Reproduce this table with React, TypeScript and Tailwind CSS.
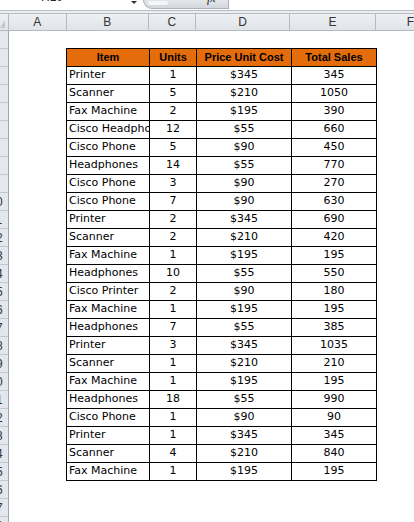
import React from "react";

const rows: [string, number, string, number][] = [
  ["Printer", 1, "$345", 345],
  ["Scanner", 5, "$210", 1050],
  ["Fax Machine", 2, "$195", 390],
  ["Cisco Headphones", 12, "$55", 660],
  ["Cisco Phone", 5, "$90", 450],
  ["Headphones", 14, "$55", 770],
  ["Cisco Phone", 3, "$90", 270],
  ["Cisco Phone", 7, "$90", 630],
  ["Printer", 2, "$345", 690],
  ["Scanner", 2, "$210", 420],
  ["Fax Machine", 1, "$195", 195],
  ["Headphones", 10, "$55", 550],
  ["Cisco Printer", 2, "$90", 180],
  ["Fax Machine", 1, "$195", 195],
  ["Headphones", 7, "$55", 385],
  ["Printer", 3, "$345", 1035],
  ["Scanner", 1, "$210", 210],
  ["Fax Machine", 1, "$195", 195],
  ["Headphones", 18, "$55", 990],
  ["Cisco Phone", 1, "$90", 90],
  ["Printer", 1, "$345", 345],
  ["Scanner", 4, "$210", 840],
  ["Fax Machine", 1, "$195", 195],
];

const rowNums = Array.from({ length: 28 }, (_, i) => i + 1);

export default function App() {
  return (
    <div className="w-[414px] h-[522px] overflow-hidden bg-white relative" style={{ fontFamily: "'DejaVu Sans', sans-serif" }}>
      {/* formula bar remnant */}
      <div className="h-[10px] flex bg-white overflow-hidden">
        <div className="w-[143px] relative">
          <div className="absolute left-[41px] top-[-10px] text-[12px] leading-[14px] text-[#222]" style={{ fontFamily: "'Liberation Sans', sans-serif" }}>H10</div>
          <div className="absolute left-[131px] top-[1px] w-0 h-0 border-l-[3px] border-r-[3px] border-t-[3px] border-l-transparent border-r-transparent border-t-[#333]" />
        </div>
        <div className="w-[86px] h-[9px] rounded-bl-[9px] bg-gradient-to-b from-[#e3e6ea] to-[#d3d7dd] border-l border-b border-r border-[#a9b0b9] relative">
          <div className="absolute left-[4px] top-[1px] w-[20px] h-[4px] rounded-full bg-[#f4f5f7]" />
          <div className="absolute left-[63px] top-[-9px] text-[12px] italic leading-[14px] text-[#222]" style={{ fontFamily: "'Liberation Serif', serif" }}>fx</div>
        </div>
        <div className="flex-1" />
      </div>
      <div className="h-[1px] bg-[#b6bcc4]" />
      <div className="h-[2px] bg-[#eceef1]" />
      {/* column headers */}
      <div className="flex h-[18px] border-t border-b border-[#b4bac2] bg-gradient-to-b from-[#eef0f3] to-[#e0e4e9] text-[12px] text-[#333]" style={{ fontFamily: "'Liberation Sans', sans-serif" }}>
        <div className="w-[9px] border-r border-[#b4bac2] relative">
          <div className="absolute left-0 bottom-[2px] w-0 h-0 border-b-[8px] border-b-[#c4c9d0] border-l-[5px] border-l-transparent" />
        </div>
        <div className="w-[58px] border-r border-[#b4bac2] flex items-center justify-center">A</div>
        <div className="w-[83px] border-r border-[#b4bac2] flex items-center justify-center">B</div>
        <div className="w-[47px] border-r border-[#b4bac2] flex items-center justify-center">C</div>
        <div className="w-[95px] border-r border-[#b4bac2] flex items-center justify-center">D</div>
        <div className="w-[86px] border-r border-[#b4bac2] flex items-center justify-center">E</div>
        <div className="flex-1 flex items-center pl-[31px]">F</div>
      </div>
      <div className="flex">
        {/* row headers */}
        <div className="w-[9px] flex flex-col border-r border-[#9ea6b1] bg-[#e4e7eb] text-[12px] text-[#333]" style={{ fontFamily: "'Liberation Sans', sans-serif" }}>
          {rowNums.map((n) => (
            <div key={n} className="h-[18px] shrink-0 border-b border-[#c3c8cf] overflow-hidden relative">
              <div className="absolute left-[-17px] top-0 w-[26px] h-[17px] flex items-center justify-center whitespace-nowrap">{n}</div>
            </div>
          ))}
        </div>
        {/* sheet */}
        <div className="flex-1 pt-[17px] pl-[57px]">
          <div className="w-[311px] border-b border-black text-[11px] text-black">
            <div className="flex h-[18px] border-t border-black bg-[#e46c0a] font-bold" style={{ fontFamily: "'Liberation Sans', sans-serif" }}>
              <div className="w-[84px] border-l border-r border-black flex items-center justify-center">Item</div>
              <div className="w-[47px] border-r border-black flex items-center justify-center">Units</div>
              <div className="w-[95px] border-r border-black flex items-center justify-center">Price Unit Cost</div>
              <div className="w-[85px] border-r border-black flex items-center justify-center">Total Sales</div>
            </div>
            {rows.map((r, i) => (
              <div key={i} className="flex h-[18px] border-t border-black">
                <div className="w-[84px] border-l border-r border-black flex items-center pl-[2px] overflow-hidden whitespace-nowrap">{r[0]}</div>
                <div className="w-[47px] border-r border-black flex items-center justify-center">{r[1]}</div>
                <div className="w-[95px] border-r border-black flex items-center justify-center">{r[2]}</div>
                <div className="w-[85px] border-r border-black flex items-center justify-center">{r[3]}</div>
              </div>
            ))}
          </div>
        </div>
      </div>
    </div>
  );
}
